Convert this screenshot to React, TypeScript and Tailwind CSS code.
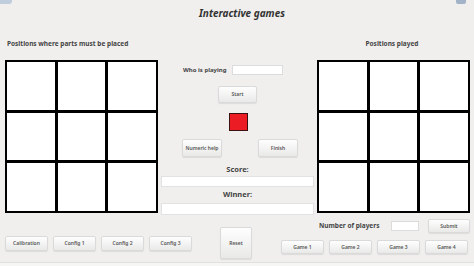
import React from "react";

const btn =
  "flex items-center justify-center rounded-[2px] border border-[#dadada] bg-gradient-to-b from-[#fefefe] to-[#e9e9e8] shadow-[0_1px_1px_rgba(0,0,0,0.08)] text-[5px] font-semibold text-[#555] leading-none";

function Board() {
  return (
    <div className="grid h-[153px] w-[153px] grid-cols-3 grid-rows-3 gap-[3px] bg-black p-[2px]">
      {Array.from({ length: 9 }).map((_, i) => (
        <div key={i} className="bg-white" />
      ))}
    </div>
  );
}

export default function App() {
  return (
    <div className="relative flex h-[266px] w-[474px] flex-col overflow-hidden bg-[#f0efee] font-['Noto_Sans',sans-serif] text-[#444]">
      <div className="absolute left-0 top-0 h-[4px] w-[12px] rounded-br-[3px] bg-[#a9bfd6] opacity-70" />
      <div className="absolute left-[456px] top-0 h-[4px] w-[10px] rounded-b-[2px] bg-[#8fa3bd] opacity-80" />

      {/* Title */}
      <div className="flex h-[26px] items-center justify-center pl-[10px]">
        <span className="text-[10px] font-bold italic text-[#333]">Interactive games</span>
      </div>

      {/* Top section */}
      <div className="flex h-[190px]">
        {/* Left */}
        <div className="flex w-[158px] flex-col">
          <div className="mt-[14px] h-[8px] pl-[7px] text-[6.5px] font-bold leading-[8px] whitespace-nowrap">
            Positions where parts must be placed
          </div>
          <div className="ml-[5px] mt-[12px]">
            <Board />
          </div>
        </div>

        {/* Middle */}
        <div className="flex w-[159px] flex-col">
          <div className="mt-[39px] flex h-[10px] items-center pl-[25px]">
            <span className="w-[43px] text-[6px] font-bold leading-none whitespace-nowrap">Who is playing</span>
            <div className="ml-[6px] h-[10px] w-[51px] border border-[#dcdcdc] bg-white" />
          </div>
          <div className="mt-[11px] flex justify-center">
            <div className={`${btn} h-[17px] w-[39px]`}>Start</div>
          </div>
          <div className="mt-[10px] flex justify-center pl-[2px]">
            <div className="h-[18px] w-[19px] border border-[#3a1010] bg-[#ec1c24]" />
          </div>
          <div className="mt-[8px] flex justify-center gap-[36px] pl-[5px]">
            <div className={`${btn} h-[18px] w-[40px]`}>Numeric help</div>
            <div className={`${btn} h-[18px] w-[40px]`}>Finish</div>
          </div>
          <div className="mt-[8px] flex h-[9px] items-center justify-center text-[7.5px] font-bold leading-none">
            Score:
          </div>
          <div className="mx-[3px] mt-[2px] h-[11px] border border-[#e2e2e2] bg-white" />
          <div className="mt-[3px] flex h-[9px] items-center justify-center text-[7.5px] font-bold leading-none">
            Winner:
          </div>
          <div className="mx-[3px] mt-[4px] h-[12px] border border-[#e2e2e2] bg-white" />
        </div>

        {/* Right */}
        <div className="flex w-[157px] flex-col">
          <div className="mt-[14px] h-[8px] pr-[7px] text-center text-[6.5px] font-bold leading-[8px] whitespace-nowrap">
            Positions played
          </div>
          <div className="mt-[12px]">
            <Board />
          </div>
        </div>
      </div>

      {/* Bottom section */}
      <div className="flex h-[46px]">
        <div className="flex w-[215px] gap-[5px] pl-[5px] pt-[20px]">
          {["Calibration", "Config 1", "Config 2", "Config 3"].map((t) => (
            <div key={t} className={`${btn} h-[15px] w-[43px]`}>
              {t}
            </div>
          ))}
        </div>
        <div className="ml-[5px] pt-[11px]">
          <div className={`${btn} h-[32px] w-[32px]`}>Reset</div>
        </div>
        <div className="ml-[29px] flex flex-col pt-[3px]">
          <div className="flex h-[14px] items-center pl-[38px]">
            <span className="w-[55px] text-[6.5px] font-bold leading-none whitespace-nowrap">Number of players</span>
            <div className="ml-[17px] h-[10px] w-[28px] border border-[#dcdcdc] bg-white" />
            <div className={`${btn} ml-[9px] h-[14px] w-[42px]`}>Submit</div>
          </div>
          <div className="mt-[7px] flex gap-[5px]">
            {["Game 1", "Game 2", "Game 3", "Game 4"].map((t) => (
              <div key={t} className={`${btn} h-[14px] w-[43px]`}>
                {t}
              </div>
            ))}
          </div>
        </div>
      </div>

      {/* Status strip */}
      <div className="h-[4px] border-t border-[#e0e0df] bg-[#f6f6f5]" />
    </div>
  );
}
